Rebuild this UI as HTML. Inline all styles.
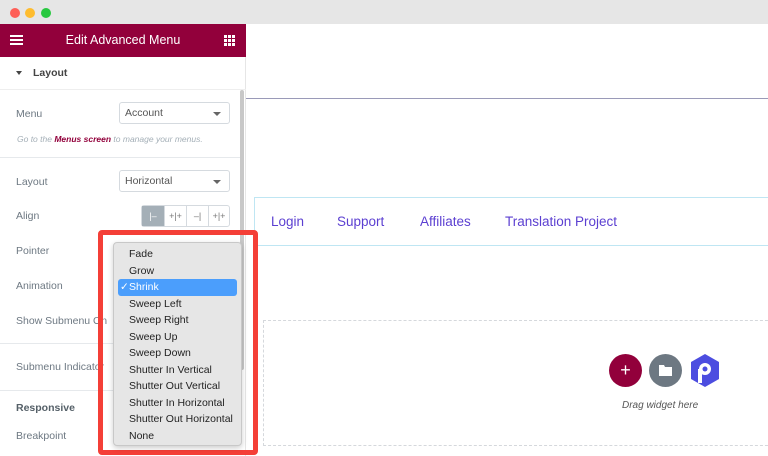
<!DOCTYPE html>
<html><head><style>
*{box-sizing:border-box;margin:0;padding:0}
body{width:768px;height:456px;overflow:hidden;background:#fff;font-family:"Liberation Sans",sans-serif;position:relative}
.abs{position:absolute}
.lbl{position:absolute;left:16px;font-size:10.5px;color:#6d7882}
.sel{position:absolute;left:119px;width:111px;height:22px;border:1px solid #d5dadf;border-radius:3px;font-size:10.5px;color:#555;padding:4px 5px}
.sel:after{content:"";position:absolute;right:8px;top:9px;border:4px solid transparent;border-top:4px solid #666}
.dd div{height:16.5px;line-height:16.5px;padding-left:15px;font-size:10.5px;color:#222}
</style></head><body>
<div class="abs" style="left:0;top:0;width:768px;height:24px;background:#e6e6e6"></div>
<div class="abs" style="left:10px;top:8px;width:10px;height:10px;border-radius:5px;background:#fe5f57"></div>
<div class="abs" style="left:25px;top:8px;width:10px;height:10px;border-radius:5px;background:#febc2e"></div>
<div class="abs" style="left:41px;top:8px;width:10px;height:10px;border-radius:5px;background:#28c840"></div>

<div class="abs" style="left:0;top:24px;width:246px;height:432px;background:#fff;border-right:1px solid #e6e6e6"></div>
<div class="abs" style="left:0;top:24px;width:246px;height:33px;background:#92003b;color:#fff;font-size:12.5px;text-align:center;line-height:33px">Edit Advanced Menu</div>
<div class="abs" style="left:10px;top:35px;width:13px;height:2px;background:#fff;box-shadow:0 4px #fff,0 8px #fff"></div>
<svg class="abs" style="left:224px;top:35px" width="11" height="11"><g fill="#fff"><rect x="0" y="0" width="3" height="3"/><rect x="4" y="0" width="3" height="3"/><rect x="8" y="0" width="3" height="3"/><rect x="0" y="4" width="3" height="3"/><rect x="4" y="4" width="3" height="3"/><rect x="8" y="4" width="3" height="3"/><rect x="0" y="8" width="3" height="3"/><rect x="4" y="8" width="3" height="3"/><rect x="8" y="8" width="3" height="3"/></g></svg>
<div class="abs" style="left:16px;top:71px;border:3px solid transparent;border-top:4px solid #444"></div>
<div class="abs" style="left:33px;top:67px;font-size:10.5px;font-weight:bold;color:#444">Layout</div>
<div class="abs" style="left:0;top:89px;width:246px;height:1px;background:#eee"></div>
<div class="abs" style="left:240px;top:90px;width:4px;height:280px;border-radius:2px;background:#c8c8c8"></div>

<div class="lbl" style="top:108px">Menu</div>
<div class="sel" style="top:102px">Account</div>
<div class="abs" style="left:17px;top:134px;font-size:8.5px;font-style:italic;color:#a4afb7">Go to the <b style="color:#92003b">Menus screen</b> to manage your menus.</div>
<div class="abs" style="left:0;top:157px;width:240px;height:1px;background:#e6e9ec"></div>
<div class="lbl" style="top:176px">Layout</div>
<div class="sel" style="top:170px">Horizontal</div>
<div class="lbl" style="top:210px">Align</div>
<div class="abs" style="left:141px;top:205px;width:89px;height:22px;border:1px solid #d5dadf;border-radius:3px;display:flex;font-size:9px;color:#777">
<div style="width:22px;background:#a4afb7;color:#fff;text-align:center;line-height:20px">|–</div>
<div style="width:22px;border-left:1px solid #d5dadf;text-align:center;line-height:20px">+|+</div>
<div style="width:22px;border-left:1px solid #d5dadf;text-align:center;line-height:20px">–|</div>
<div style="flex:1;border-left:1px solid #d5dadf;text-align:center;line-height:20px">+|+</div></div>
<div class="lbl" style="top:245px">Pointer</div>
<div class="lbl" style="top:280px">Animation</div>
<div class="lbl" style="top:315px">Show Submenu On</div>
<div class="abs" style="left:0;top:343px;width:240px;height:1px;background:#e6e9ec"></div>
<div class="lbl" style="top:361px">Submenu Indicator</div>
<div class="abs" style="left:0;top:390px;width:240px;height:1px;background:#e6e9ec"></div>
<div class="lbl" style="top:402px;font-weight:bold;color:#556068">Responsive</div>
<div class="lbl" style="top:430px">Breakpoint</div>

<div class="abs" style="left:246px;top:98px;width:522px;height:1px;background:#9a9ab8"></div>
<div class="abs" style="left:254px;top:197px;width:520px;height:49px;border:1px solid #bfe6f3"></div>
<div class="abs" style="left:271px;top:214px;font-size:13.5px;color:#5b3fd1">Login</div>
<div class="abs" style="left:337px;top:214px;font-size:13.5px;color:#5b3fd1">Support</div>
<div class="abs" style="left:420px;top:214px;font-size:13.5px;color:#5b3fd1">Affiliates</div>
<div class="abs" style="left:505px;top:214px;font-size:13.5px;color:#5b3fd1">Translation Project</div>
<div class="abs" style="left:263px;top:320px;width:520px;height:126px;border:1px dashed #d5d8dc"></div>
<div class="abs" style="left:609px;top:354px;width:33px;height:33px;border-radius:50%;background:#92003b;color:#fff;text-align:center;line-height:32px;font-size:18px">+</div>
<div class="abs" style="left:649px;top:354px;width:33px;height:33px;border-radius:50%;background:#6d7882"></div>
<svg class="abs" style="left:659px;top:364px" width="13" height="12"><path d="M0 1h5l1 2h7v9H0z" fill="#fff"/></svg>
<svg class="abs" style="left:688px;top:353px" width="34" height="36" viewBox="0 0 34 36"><path d="M17 1L31 9V26L17 34L3 26V9Z" fill="#4c4de0"/><circle cx="17" cy="16" r="6" fill="#fff"/><circle cx="17" cy="16" r="2.5" fill="#4c4de0"/><rect x="10" y="16" width="4" height="14" fill="#fff"/></svg>
<div class="abs" style="left:622px;top:400px;font-size:10px;font-style:italic;color:#555">Drag widget here</div>

<div class="abs" style="left:98px;top:230px;width:160px;height:225px;border:5px solid #f43f37;border-radius:4px"></div>
<div class="abs dd" style="left:113px;top:242px;width:129px;height:204px;background:#e6e6e6;border:1px solid #c8c8c8;border-radius:4px;padding-top:3px;box-shadow:0 2px 6px rgba(0,0,0,.2)">
<div>Fade</div><div>Grow</div>
<div style="background:#4b9efc;color:#fff;margin:0 4px;padding-left:11px;border-radius:3px;position:relative"><span style="position:absolute;left:2px">✓</span>Shrink</div>
<div>Sweep Left</div><div>Sweep Right</div><div>Sweep Up</div><div>Sweep Down</div><div>Shutter In Vertical</div><div>Shutter Out Vertical</div><div>Shutter In Horizontal</div><div>Shutter Out Horizontal</div><div>None</div></div>
</body></html>
